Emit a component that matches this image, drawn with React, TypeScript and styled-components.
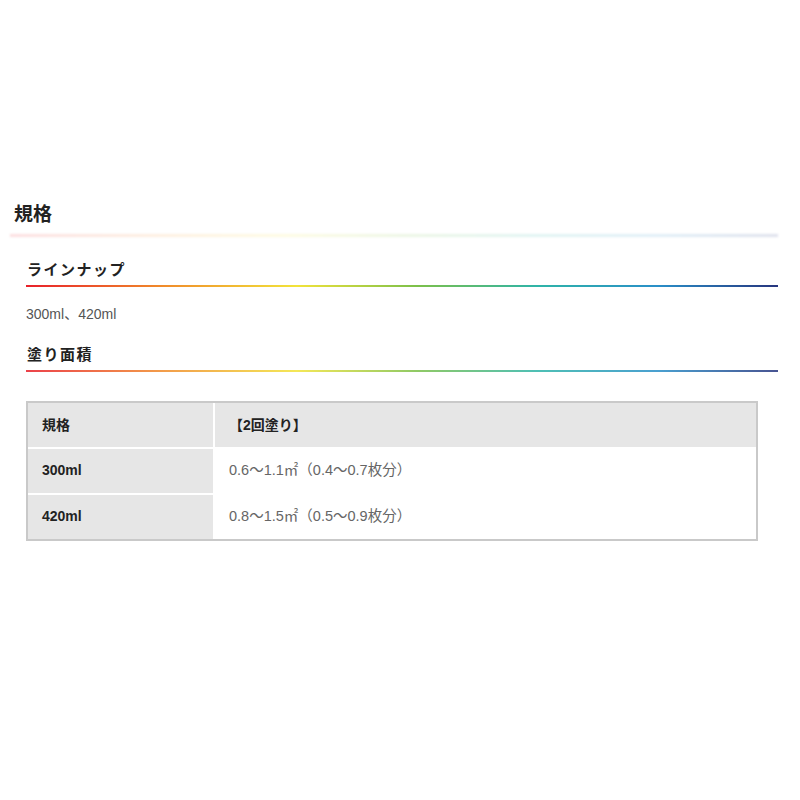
import React from "react";
import styled, { createGlobalStyle } from "styled-components";

const Global = createGlobalStyle`
  html, body { margin: 0; padding: 0; background: #fff; }
  body { font-family: "Liberation Sans", "Noto Sans CJK JP", sans-serif; color: #333; }
`;

const Page = styled.div`
  width: 800px;
  height: 800px;
  padding-top: 198px;
  box-sizing: border-box;
`;

const TitleBlock = styled.div`
  margin: 0 22px 0 10px;
`;

const Title = styled.h2`
  margin: 0;
  padding: 0 0 0 4px;
  height: 36px;
  line-height: 30px;
  font-size: 19px;
  font-weight: 700;
  color: #222;
  font-family: "Noto Sans CJK JP", sans-serif;
`;

const rainbow = "linear-gradient(to right, #e8202a 0%, #f08a2a 18%, #f2e33a 36%, #7cc04a 52%, #2fb4a8 68%, #2a8fc8 84%, #27357e 100%)";

const SoftLine = styled.div`
  height: 3px;
  background: ${rainbow};
  opacity: 0.14;
  filter: blur(1px);
`;

const Section = styled.div<{ $top: number }>`
  margin: ${(p) => p.$top}px 22px 0 26px;
`;

const SubTitle = styled.h3`
  margin: 0;
  padding: 0 0 0 1px;
  font-size: 15px;
  line-height: 28px;
  height: 30px;
  font-weight: 700;
  letter-spacing: 1.5px;
  color: #222;
  font-family: "Noto Sans CJK JP", sans-serif;
`;

const ColorLine = styled.div<{ $fade?: boolean }>`
  height: 2px;
  background: ${rainbow};
  opacity: ${(p) => (p.$fade ? 0.85 : 1)};
`;

const Body = styled.p`
  margin: 17px 0 0;
  font-size: 14px;
  line-height: 20px;
  color: #555;
  font-family: "Liberation Sans", "Noto Sans CJK JP", sans-serif;
`;

const Table = styled.table`
  margin: 29px 0 0 26px;
  width: 732px;
  border-collapse: separate;
  border-spacing: 0;
  border: 2px solid #c9c9c9;
  background: #fff;
`;

const Cell = styled.td<{ $head?: boolean; $gray?: boolean }>`
  height: 46px;
  box-sizing: border-box;
  padding: 0 0 3px 14px;
  line-height: 20px;
  font-size: ${(p) => (p.$head ? "14px" : "14.5px")};
  font-weight: ${(p) => (p.$head ? 700 : 400)};
  color: ${(p) => (p.$head ? "#222" : "#666")};
  background: ${(p) => (p.$gray ? "#e6e6e6" : "#fff")};
  border-top: 2px solid #fff;
  border-left: 2px solid #fff;
  font-family: "Liberation Sans", "Noto Sans CJK JP", sans-serif;
  tr:first-child > & { border-top: none; height: 44px; padding-bottom: 1px; }
  &:first-child { border-left: none; width: 185px; }
`;

export default function App() {
  return (
    <Page>
      <Global />
      <TitleBlock>
        <Title>規格</Title>
        <SoftLine />
      </TitleBlock>
      <Section $top={18}>
        <SubTitle>ラインナップ</SubTitle>
        <ColorLine />
        <Body>300ml、420ml</Body>
      </Section>
      <Section $top={16}>
        <SubTitle>塗り面積</SubTitle>
        <ColorLine $fade />
      </Section>
      <Table>
        <tbody>
          <tr>
            <Cell $head $gray>規格</Cell>
            <Cell $head $gray>【2回塗り】</Cell>
          </tr>
          <tr>
            <Cell $head $gray>300ml</Cell>
            <Cell>0.6～1.1㎡（0.4～0.7枚分）</Cell>
          </tr>
          <tr>
            <Cell $head $gray>420ml</Cell>
            <Cell>0.8～1.5㎡（0.5～0.9枚分）</Cell>
          </tr>
        </tbody>
      </Table>
    </Page>
  );
}
